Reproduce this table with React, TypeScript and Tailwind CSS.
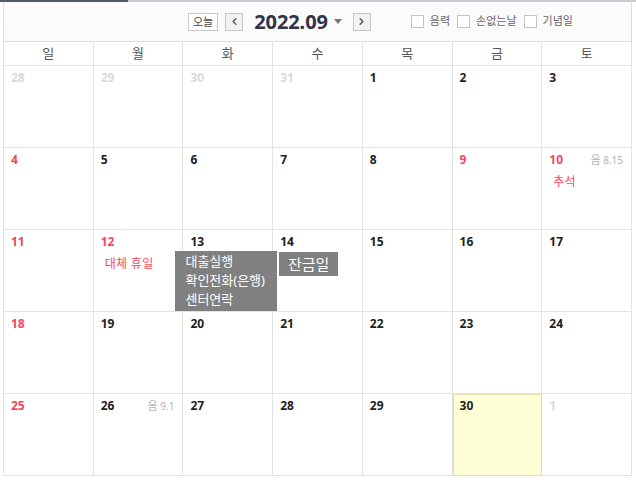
import { ChevronLeft, ChevronRight } from 'lucide-react';

type Day = {
  d: number;
  other?: boolean;
  red?: boolean;
  lunar?: string;
  note?: string;
  today?: boolean;
};

const weeks: Day[][] = [
  [{ d: 28, other: true }, { d: 29, other: true }, { d: 30, other: true }, { d: 31, other: true }, { d: 1 }, { d: 2 }, { d: 3 }],
  [{ d: 4, red: true }, { d: 5 }, { d: 6 }, { d: 7 }, { d: 8 }, { d: 9, red: true }, { d: 10, red: true, lunar: '8.15', note: '추석' }],
  [{ d: 11, red: true }, { d: 12, red: true, note: '대체 휴일' }, { d: 13 }, { d: 14 }, { d: 15 }, { d: 16 }, { d: 17 }],
  [{ d: 18, red: true }, { d: 19 }, { d: 20 }, { d: 21 }, { d: 22 }, { d: 23 }, { d: 24 }],
  [{ d: 25, red: true }, { d: 26, lunar: '9.1' }, { d: 27 }, { d: 28 }, { d: 29 }, { d: 30, today: true }, { d: 1, other: true }],
];

const weekdays = ['일', '월', '화', '수', '목', '금', '토'];

function Check({ label }: { label: string }) {
  return (
    <label className="flex items-center gap-[6px] text-[11px] text-[#666]">
      <span className="w-[13px] h-[13px] border border-[#c4c4c4] bg-white" />
      {label}
    </label>
  );
}

export default function App() {
  return (
    <div
      className="w-[636px] h-[482px] bg-white overflow-hidden"
      style={{ fontFamily: '"Noto Sans", "Noto Sans CJK KR", sans-serif' }}
    >
      {/* tab indicator */}
      <div className="flex items-start h-[2px]">
        <div className="w-[128px] h-[2px] bg-[#4f5a70]" />
        <div className="flex-1 h-[2px] bg-[#c9cdd2]" />
      </div>

      <div className="ml-[3px] w-[629px] border-l border-[#e3e3e3]">
        {/* toolbar */}
        <div className="h-[40px] bg-[#fbfbfb] border-b border-[#dcdcdc] border-r flex items-center pl-[184px]">
          <button className="h-[18px] px-[4px] border border-[#c8c8c8] bg-white text-[11px] leading-none text-[#444]">
            오늘
          </button>
          <button className="ml-[7px] w-[18px] h-[18px] border border-[#c8c8c8] bg-[#f2f2f2] flex items-center justify-center">
            <ChevronLeft className="w-[11px] h-[11px] text-[#555]" strokeWidth={3} />
          </button>
          <span className="ml-[11px] text-[20px] font-bold leading-none text-[#2f3349] tracking-[-0.1px]">2022.09</span>
          <span className="ml-[6px] w-0 h-0 border-l-[4px] border-r-[4px] border-t-[5px] border-l-transparent border-r-transparent border-t-[#777]" />
          <button className="ml-[11px] w-[18px] h-[18px] border border-[#c8c8c8] bg-[#f2f2f2] flex items-center justify-center">
            <ChevronRight className="w-[11px] h-[11px] text-[#555]" strokeWidth={3} />
          </button>
          <div className="ml-[40px] flex items-center gap-[7px]">
            <Check label="음력" />
            <Check label="손없는날" />
            <Check label="기념일" />
          </div>
        </div>

        {/* weekday header */}
        <div className="grid grid-cols-7">
          {weekdays.map((w) => (
            <div
              key={w}
              className="h-[24px] border-r border-b border-[#e3e3e3] flex items-center justify-center text-[13px] text-[#555]"
            >
              {w}
            </div>
          ))}
        </div>

        {/* weeks */}
        {weeks.map((week, wi) => (
          <div key={wi} className="grid grid-cols-7">
            {week.map((day, di) => (
              <div
                key={di}
                className={
                  'relative h-[82px] border-r border-b border-[#e3e3e3] ' +
                  (day.today ? 'bg-[#ffffd6] outline outline-1 outline-[#e3dfae] -outline-offset-1' : '')
                }
              >
                <div className="flex items-start justify-between pl-[7px] pr-[8px] pt-[4px]">
                  <span
                    className={
                      'text-[12px] font-bold leading-[16px] ' +
                      (day.other ? 'text-[#dadada]' : day.red ? 'text-[#f5475c]' : 'text-[#1e1e1e]')
                    }
                  >
                    {day.d}
                  </span>
                  {day.lunar && (
                    <span className="text-[10px] leading-[16px] text-[#b4b4b4]">
                      <span className="text-[11px]">음</span> {day.lunar}
                    </span>
                  )}
                </div>
                {day.note && (
                  <div className="pl-[11px] mt-[7px] text-[12px] leading-[14px] text-[#f5475c] tracking-[0.3px]">
                    {day.note}
                  </div>
                )}
                {wi === 2 && day.d === 13 && (
                  <div className="absolute left-[-8px] top-[21px] w-[102px] h-[60px] bg-[#808080] pl-[10px] pt-[1px] text-[13px] leading-[19px] text-white z-10">
                    <div>대출실행</div>
                    <div>확인전화(은행)</div>
                    <div>센터연락</div>
                  </div>
                )}
                {wi === 2 && day.d === 14 && (
                  <div className="absolute left-[6px] top-[22px] w-[59px] h-[24px] bg-[#808080] flex items-center justify-center text-[15px] leading-none text-white z-10">
                    잔금일
                  </div>
                )}
              </div>
            ))}
          </div>
        ))}
      </div>
    </div>
  );
}
